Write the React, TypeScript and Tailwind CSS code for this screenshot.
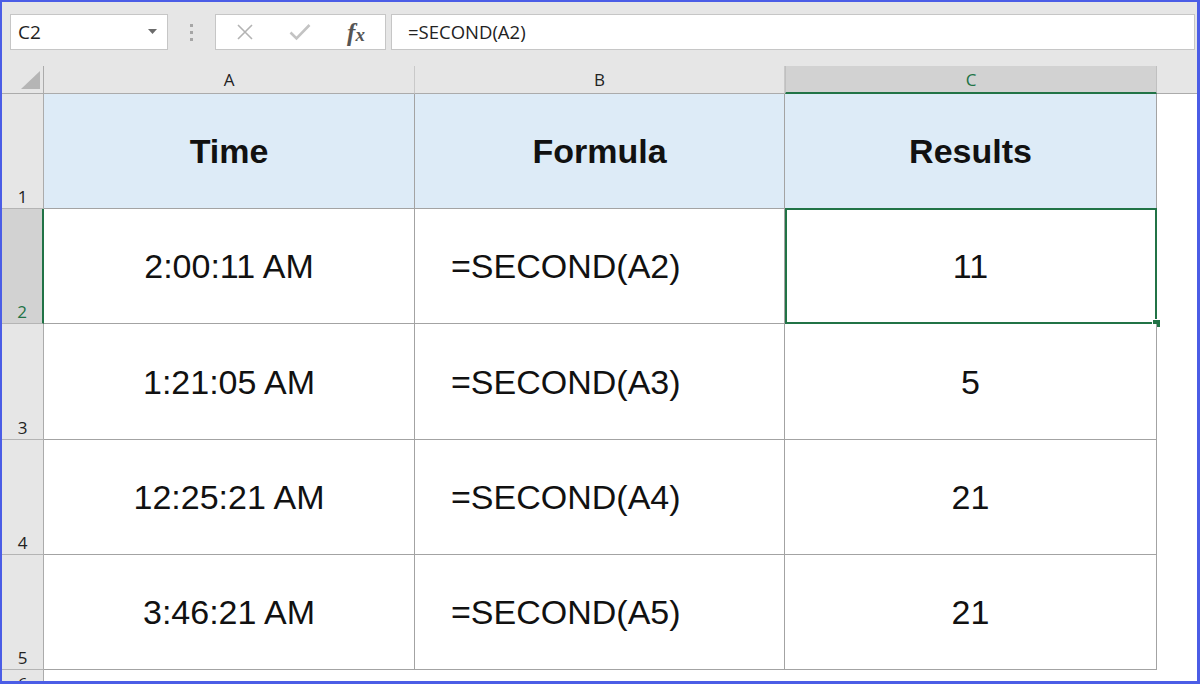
import React from "react";

const data = [
  { n: "2", t: "2:00:11 AM", f: "=SECOND(A2)", r: "11", sel: true },
  { n: "3", t: "1:21:05 AM", f: "=SECOND(A3)", r: "5", sel: false },
  { n: "4", t: "12:25:21 AM", f: "=SECOND(A4)", r: "21", sel: false },
  { n: "5", t: "3:46:21 AM", f: "=SECOND(A5)", r: "21", sel: false },
];

const uiFont = { fontFamily: '"Open Sans", "Noto Sans", sans-serif' };
const cellFont = { fontFamily: '"Liberation Sans", Arial, sans-serif' };

function RowHead({ n, sel }: { n: string; sel?: boolean }) {
  return (
    <div
      className={
        "flex items-end justify-center pb-[3px] text-[17px] leading-none border-b border-[#b4b4b4] " +
        (sel
          ? "bg-[#d2d2d2] text-[#217346] border-r-2 border-r-[#217346]"
          : "bg-[#e6e6e6] text-[#222] border-r border-r-[#ababab]")
      }
      style={uiFont}
    >
      {n}
    </div>
  );
}

export default function App() {
  return (
    <div
      className="w-[1200px] h-[684px] overflow-hidden flex flex-col bg-[#e6e6e6] border-t-2 border-l-2 border-r-[3px] border-b-[3px] border-[#4b5de6]"
      style={uiFont}
    >
      {/* Toolbar */}
      <div className="h-[64px] shrink-0 flex items-start pt-[12px]">
        <div className="ml-[8px] w-[158px] h-[36px] bg-white border border-[#c6c6c6] flex items-center justify-between pl-[7px] pr-[10px]">
          <span className="text-[19px] text-[#222] leading-none">C2</span>
          <svg width="9" height="6" viewBox="0 0 9 6">
            <path d="M0 0 L9 0 L4.5 5 Z" fill="#6b6b6b" />
          </svg>
        </div>
        <div className="w-[47px] h-[36px] flex flex-col items-center justify-center gap-[4px]">
          <div className="w-[3px] h-[3px] bg-[#a6a6a6]" />
          <div className="w-[3px] h-[3px] bg-[#a6a6a6]" />
          <div className="w-[3px] h-[3px] bg-[#a6a6a6]" />
        </div>
        <div className="w-[171px] h-[36px] bg-white border border-[#c6c6c6] flex items-center">
          <div className="w-[56px] flex justify-center pl-[2px]">
            <svg width="18" height="18" viewBox="0 0 18 18">
              <path d="M2 2 L16 16 M16 2 L2 16" stroke="#b3b3b3" strokeWidth="1.6" fill="none" />
            </svg>
          </div>
          <div className="w-[56px] flex justify-center">
            <svg width="22" height="18" viewBox="0 0 22 18">
              <path d="M1.5 9.5 L7.5 15.5 L20.5 2" stroke="#c3c3c3" strokeWidth="2.6" fill="none" />
            </svg>
          </div>
          <div className="w-[56px] flex justify-center">
            <span
              className="text-[#555] italic font-bold leading-none"
              style={{ fontFamily: '"Liberation Serif", "DejaVu Serif", serif' }}
            >
              <span className="text-[25px]">f</span>
              <span className="text-[19px]">x</span>
            </span>
          </div>
        </div>
        <div className="ml-[5px] mr-[2px] flex-1 h-[36px] bg-white border border-[#c6c6c6] flex items-center pl-[16px]">
          <span className="text-[18.5px] text-[#222] leading-none">=SECOND(A2)</span>
        </div>
      </div>

      {/* Grid */}
      <div className="flex-1 grid grid-cols-[42px_371px_370px_372px_1fr] grid-rows-[28px_115px_115px_116px_115px_115px_1fr]">
        {/* Column header row */}
        <div className="bg-[#e6e6e6] border-r border-b border-[#ababab] flex items-end justify-end pr-[3px] pb-[4px]">
          <svg width="19" height="18" viewBox="0 0 19 18">
            <path d="M19 0 L19 18 L0 18 Z" fill="#b5b5b5" />
          </svg>
        </div>
        <div className="bg-[#e6e6e6] border-r border-r-[#c9c9c9] border-b border-b-[#ababab] flex items-center justify-center text-[17px] text-[#222] leading-none">
          A
        </div>
        <div className="bg-[#e6e6e6] border-r border-r-[#c9c9c9] border-b border-b-[#ababab] flex items-center justify-center text-[17px] text-[#222] leading-none">
          B
        </div>
        <div className="bg-[#d2d2d2] border-r border-r-[#c0c0c0] border-l border-l-[#c0c0c0] border-b-2 border-b-[#217346] flex items-center justify-center text-[17px] text-[#217346] leading-none">
          C
        </div>
        <div className="bg-[#e6e6e6] border-b border-[#ababab]" />

        {/* Row 1 */}
        <RowHead n="1" />
        <div className="bg-[#ddebf7] border-r border-b border-[#a3a3a3] flex items-center justify-center">
          <span className="text-[34px] font-bold text-[#111] leading-none" style={cellFont}>Time</span>
        </div>
        <div className="bg-[#ddebf7] border-r border-b border-[#a3a3a3] flex items-center justify-center">
          <span className="text-[34px] font-bold text-[#111] leading-none" style={cellFont}>Formula</span>
        </div>
        <div className="bg-[#ddebf7] border-r border-b border-[#a3a3a3] flex items-center justify-center">
          <span className="text-[34px] font-bold text-[#111] leading-none" style={cellFont}>Results</span>
        </div>
        <div className="bg-white" />

        {data.map((d) => (
          <React.Fragment key={d.n}>
            <RowHead n={d.n} sel={d.sel} />
            <div className="bg-white border-r border-b border-[#a3a3a3] flex items-center justify-center">
              <span className="text-[34px] text-[#111] leading-none" style={cellFont}>{d.t}</span>
            </div>
            <div className="bg-white border-r border-b border-[#a3a3a3] flex items-center pl-[36px]">
              <span className="text-[34px] text-[#111] leading-none" style={cellFont}>{d.f}</span>
            </div>
            <div className="relative bg-white border-r border-b border-[#a3a3a3] flex items-center justify-center">
              <span className="text-[34px] text-[#111] leading-none" style={cellFont}>{d.r}</span>
              {d.sel && (
                <>
                  <div className="absolute left-0 -top-[1px] -right-[1px] -bottom-[1px] border-2 border-[#217346] pointer-events-none" />
                  <div className="absolute -right-[5px] -bottom-[5px] w-[9px] h-[9px] bg-[#217346] border border-white" />
                </>
              )}
            </div>
            <div className="bg-white" />
          </React.Fragment>
        ))}

        {/* Row 6 (partial) */}
        <div className="bg-[#e6e6e6] border-r border-[#ababab] flex justify-center pt-[5px] overflow-hidden text-[17px] text-[#222] leading-none">
          6
        </div>
        <div className="bg-white" />
        <div className="bg-white" />
        <div className="bg-white" />
        <div className="bg-white" />
      </div>
    </div>
  );
}
